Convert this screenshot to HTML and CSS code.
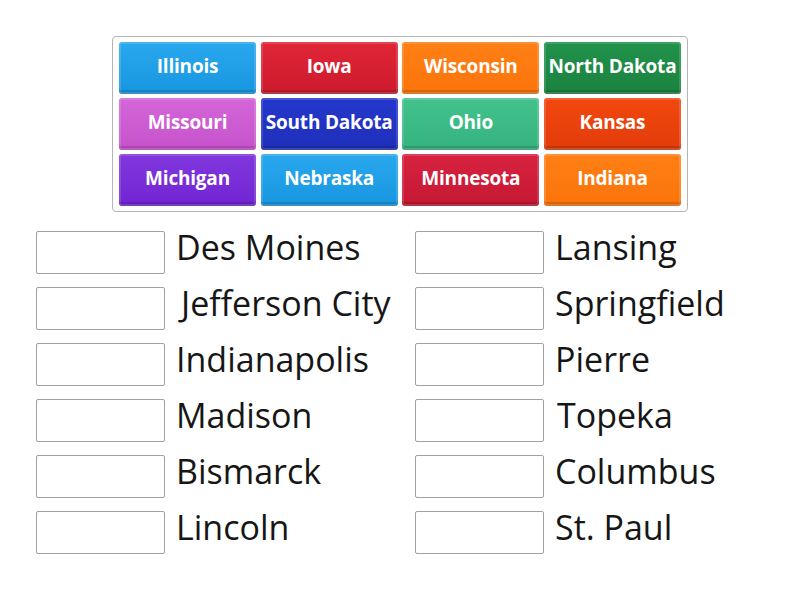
FILE: index.html
```html
<!DOCTYPE html>
<html lang="en">
<head>
<meta charset="utf-8">
<title>State capitals</title>
<link rel="stylesheet" href="styles.css">
</head>
<body>
<div class="page">
  <div class="bank">
    <div class="tile c-blue">Illinois</div>
    <div class="tile c-red">Iowa</div>
    <div class="tile c-orange">Wisconsin</div>
    <div class="tile c-green">North Dakota</div>
    <div class="tile c-orchid">Missouri</div>
    <div class="tile c-navy">South Dakota</div>
    <div class="tile c-mint">Ohio</div>
    <div class="tile c-flame">Kansas</div>
    <div class="tile c-purple">Michigan</div>
    <div class="tile c-blue">Nebraska</div>
    <div class="tile c-crimson">Minnesota</div>
    <div class="tile c-orange">Indiana</div>
  </div>
  <div class="answers">
    <div class="row"><div class="slot"></div><span class="label">Des Moines</span></div>
    <div class="row"><div class="slot"></div><span class="label">Lansing</span></div>
    <div class="row"><div class="slot"></div><span class="label shift-5">Jefferson City</span></div>
    <div class="row"><div class="slot"></div><span class="label">Springfield</span></div>
    <div class="row"><div class="slot"></div><span class="label">Indianapolis</span></div>
    <div class="row"><div class="slot"></div><span class="label">Pierre</span></div>
    <div class="row"><div class="slot"></div><span class="label">Madison</span></div>
    <div class="row"><div class="slot"></div><span class="label shift-2">Topeka</span></div>
    <div class="row"><div class="slot"></div><span class="label">Bismarck</span></div>
    <div class="row"><div class="slot"></div><span class="label">Columbus</span></div>
    <div class="row"><div class="slot"></div><span class="label">Lincoln</span></div>
    <div class="row"><div class="slot"></div><span class="label">St. Paul</span></div>
  </div>
</div>
</body>
</html>
```
FILE: styles.css
```css
* { box-sizing: border-box; }
html, body { margin: 0; padding: 0; background: #fff; }
body { font-family: "Open Sans", "Liberation Sans", sans-serif; }

.page {
  width: 800px;
  height: 600px;
  padding-top: 36px;
}

.bank {
  margin-left: 112px;
  width: 576px;
  height: 176px;
  border: 1px solid #b4b4b4;
  border-radius: 4px;
  padding: 5px 6px 5px 6px;
  display: grid;
  grid-template-columns: repeat(4, 137px);
  grid-auto-rows: 52px;
  column-gap: 4.67px;
  row-gap: 4px;
}

.tile {
  border-radius: 3px;
  color: #fff;
  font-weight: 700;
  font-size: 19px;
  display: flex;
  align-items: center;
  justify-content: center;
  white-space: nowrap;
  letter-spacing: -0.2px;
  padding-bottom: 4px;
  box-shadow:
    inset 0 0 0 2px rgba(255,255,255,0.14),
    inset 0 -4px 0 rgba(0,0,0,0.14);
}

.c-blue    { background: linear-gradient(#2aa8ee, #1796e0); }
.c-red     { background: linear-gradient(#e02638, #cc1a2c); }
.c-orange  { background: linear-gradient(#ff8016, #fb740a); }
.c-green   { background: linear-gradient(#21924b, #1b823f); }
.c-orchid  { background: linear-gradient(#d466d8, #c652cb); }
.c-navy    { background: linear-gradient(#2638cc, #1e2fbb); }
.c-mint    { background: linear-gradient(#44c28d, #35b37e); }
.c-flame   { background: linear-gradient(#f2480f, #e33c0a); }
.c-purple  { background: linear-gradient(#8137dd, #7125d3); }
.c-crimson { background: linear-gradient(#d72340, #c51733); }

.answers {
  margin-left: 36px;
  margin-top: 19px;
  display: grid;
  grid-template-columns: 379px 379px;
  grid-auto-rows: 43px;
  row-gap: 13px;
}

.row {
  display: flex;
  align-items: center;
}

.slot {
  width: 129px;
  height: 43px;
  border: 1px solid #a0a0a0;
  border-radius: 2px;
  background: #fff;
  flex: none;
}

.label {
  margin-left: 11px;
  font-size: 34px;
  color: #161616;
  line-height: 43px;
  white-space: nowrap;
  padding-bottom: 11px;
}

.shift-5 { margin-left: 16px; }
.shift-2 { margin-left: 13px; }
```
